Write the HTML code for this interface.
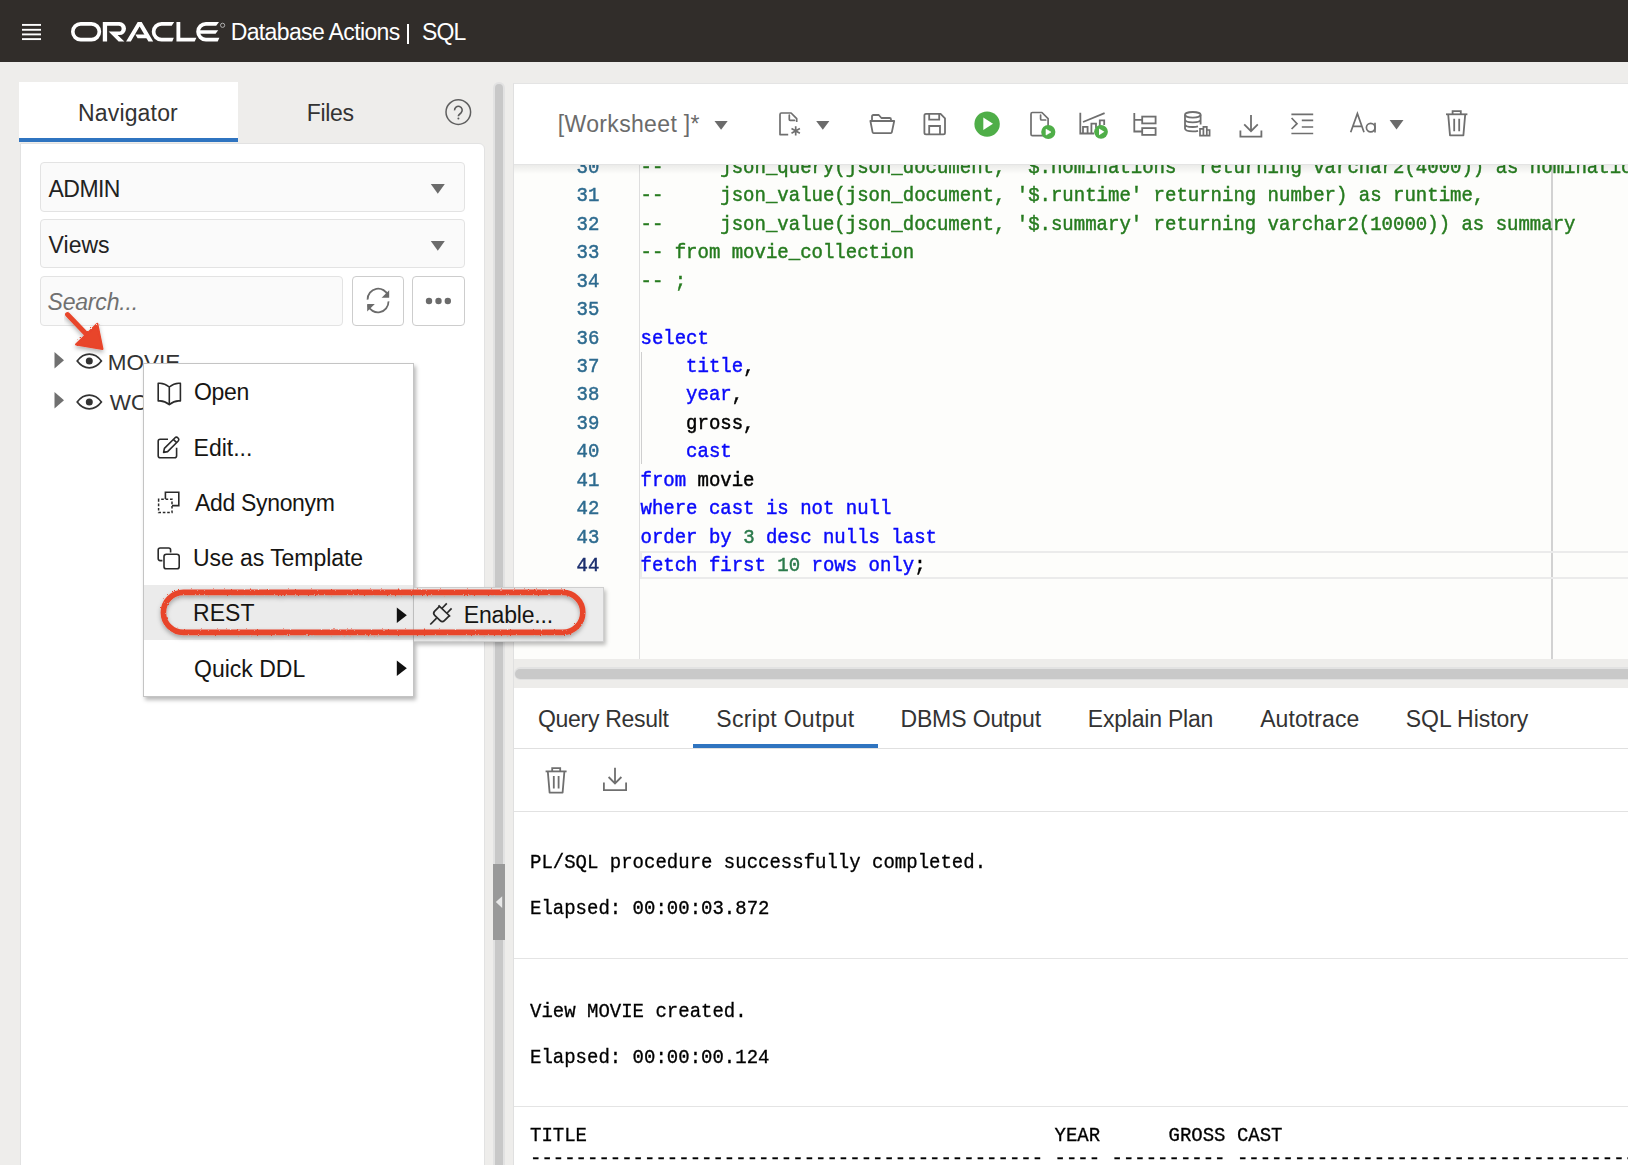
<!DOCTYPE html>
<html><head><meta charset="utf-8"><title>Database Actions | SQL</title>
<style>
html,body{margin:0;padding:0;}
body{width:1628px;height:1165px;overflow:hidden;position:relative;background:#eeedeb;font-family:"Liberation Sans",sans-serif;}
.t{position:absolute;white-space:pre;font-family:"Liberation Sans",sans-serif;line-height:normal;}
.m{position:absolute;white-space:pre;font-family:"Liberation Mono",monospace;line-height:normal;-webkit-text-stroke:0.45px currentColor;}
</style></head><body>

<div style="position:absolute;left:0px;top:0px;width:1628px;height:62px;background:#312d2a;"></div>
<svg style="position:absolute;left:0px;top:0px;overflow:visible;" width="60" height="62" viewBox="0 0 60 62"><line x1="22" y1="24.9" x2="41" y2="24.9" stroke="#fff" stroke-width="1.9"/><line x1="22" y1="29.8" x2="41" y2="29.8" stroke="#fff" stroke-width="1.9"/><line x1="22" y1="34.4" x2="41" y2="34.4" stroke="#fff" stroke-width="1.9"/><line x1="22" y1="39.1" x2="41" y2="39.1" stroke="#fff" stroke-width="1.9"/></svg>
<svg style="position:absolute;left:71px;top:21.7px;overflow:visible;" width="155" height="20" viewBox="0 0 155 20"><g fill="#fff" fill-rule="evenodd">
<path d="M9.75,0 H20.45 A9.75,9.75 0 0 1 20.45,19.5 H9.75 A9.75,9.75 0 0 1 9.75,0 Z M9.65,3.7 H20.45 A6.05,6.05 0 0 1 20.45,15.8 H9.65 A6.05,6.05 0 0 1 9.65,3.7 Z"/>
<path d="M31.8,19.5 V0 H48.45 A6.55,6.55 0 0 1 48.45,13.1 H46.6 L53.4,19.5 H47.6 L37.6,9.6 H47.65 A2.95,2.95 0 0 0 47.65,3.7 H36.1 V19.5 Z"/>
<path d="M55.1,19.5 L66.7,0 H70.7 L82.2,19.5 H77.4 L68.6,4.4 L59.8,19.5 Z"/>
<path d="M64.4,12.5 H74.6 L76.7,16.2 H66.6 Z"/>
<path d="M103.2,0 H90.5 A9.75,9.75 0 0 0 90.5,19.5 H101.3 L102.8,15.8 H90.5 A6.05,6.05 0 0 1 90.5,3.7 H100.7 Z"/>
<path d="M105.45,0 H109.3 V15.8 H125.4 L123.7,19.5 H105.45 Z"/>
<path d="M148,0 H134.95 A9.75,9.75 0 0 0 134.95,19.5 H146.7 L148.4,15.8 H134.95 A6,6 0 0 1 134.95,3.8 H145.2 Z"/>
<path d="M128.95,8.3 H147.2 L144.6,11.8 H128.95 Z"/>
</g>
<circle cx="151.6" cy="3.3" r="2.1" fill="none" stroke="#bbb" stroke-width="0.9"/></svg>
<div class="t" style="left:230.70px;top:19.00px;font-size:23px;color:#fff;letter-spacing:-0.627px;">Database Actions</div>
<div style="position:absolute;left:406.5px;top:23.5px;width:2.3000000000000114px;height:20.700000000000003px;background:#fff;"></div>
<div class="t" style="left:422.00px;top:19.00px;font-size:23px;color:#fff;letter-spacing:-0.85px;">SQL</div>
<div style="position:absolute;left:19px;top:82px;width:219px;height:60px;background:#fff;"></div>
<div style="position:absolute;left:19px;top:138px;width:219px;height:4px;background:#2f74c0;"></div>
<div class="t" style="left:78.00px;top:100.00px;font-size:23px;color:#333;letter-spacing:0.163px;">Navigator</div>
<div class="t" style="left:306.80px;top:100.00px;font-size:23px;color:#333;letter-spacing:-0.325px;">Files</div>
<svg style="position:absolute;left:440px;top:94px;overflow:visible;" width="36" height="36" viewBox="0 0 36 36"><circle cx="18.3" cy="18.1" r="12.3" fill="none" stroke="#5f5f5f" stroke-width="1.5"/><path d="M14.6,16.4 A3.8,3.8 0 1 1 21.2,18.6 L19.2,20.6 Q18.4,21.4 18.4,22.2" fill="none" stroke="#5a5a5a" stroke-width="1.6"/><circle cx="18.4" cy="24.6" r="1" fill="#5a5a5a"/></svg>
<div style="position:absolute;left:19.5px;top:142.5px;width:465.0px;height:1057.5px;background:#fff;border:1px solid #e2e2e2;border-top-right-radius:6px;box-sizing:border-box;"></div>
<div style="position:absolute;left:39.5px;top:162.3px;width:425.1px;height:50.099999999999994px;background:#fafafa;border:1px solid #e3e3e3;border-radius:4px;box-sizing:border-box;"></div>
<div class="t" style="left:48.60px;top:176.00px;font-size:23px;color:#222;letter-spacing:-0.575px;">ADMIN</div>
<svg style="position:absolute;left:430px;top:184px;overflow:visible;" width="16" height="10" viewBox="0 0 16 10"><path d="M0.8,0 H14.8 L7.8,9.8 Z" fill="#6b6b6b"/></svg>
<div style="position:absolute;left:39.5px;top:219.3px;width:425.1px;height:49.099999999999966px;background:#fafafa;border:1px solid #e3e3e3;border-radius:4px;box-sizing:border-box;"></div>
<div class="t" style="left:48.60px;top:232.00px;font-size:23px;color:#222;letter-spacing:0px;">Views</div>
<svg style="position:absolute;left:430px;top:241px;overflow:visible;" width="16" height="10" viewBox="0 0 16 10"><path d="M0.8,0 H14.8 L7.8,9.8 Z" fill="#6b6b6b"/></svg>
<div style="position:absolute;left:39.6px;top:276.3px;width:303.79999999999995px;height:49.39999999999998px;background:#fafafa;border:1px solid #e3e3e3;border-radius:4px;box-sizing:border-box;"></div>
<div class="t" style="left:47.50px;top:289.00px;font-size:23px;color:#707070;letter-spacing:-0.188px;font-style:italic;">Search...</div>
<div style="position:absolute;left:352.3px;top:276.3px;width:51.39999999999998px;height:49.39999999999998px;background:#fff;border:1px solid #cdcdcd;border-radius:4px;box-sizing:border-box;"></div>
<div style="position:absolute;left:412.4px;top:276.3px;width:52.200000000000045px;height:49.39999999999998px;background:#fff;border:1px solid #cdcdcd;border-radius:4px;box-sizing:border-box;"></div>
<svg style="position:absolute;left:362px;top:285px;overflow:visible;" width="32" height="32" viewBox="0 0 32 32"><path d="M26.2,10.8 A10.6,10.6 0 0 0 5.6,14.6" fill="none" stroke="#6b6b6b" stroke-width="1.8"/><path d="M5.9,20.2 A10.6,10.6 0 0 0 26.5,16.4" fill="none" stroke="#6b6b6b" stroke-width="1.8"/><path d="M27.2,5.2 V12.8 H19.6 Z" fill="#6b6b6b"/><path d="M5.2,26.6 V19 H12.8 Z" fill="#6b6b6b"/></svg>
<svg style="position:absolute;left:420px;top:292px;overflow:visible;" width="40" height="18" viewBox="0 0 40 18"><circle cx="9" cy="9" r="3.2" fill="#6b6b6b"/><circle cx="18.5" cy="9" r="3.2" fill="#6b6b6b"/><circle cx="27.8" cy="9" r="3.2" fill="#6b6b6b"/></svg>
<svg style="position:absolute;left:54px;top:352.2px;overflow:visible;" width="12" height="17" viewBox="0 0 12 17"><path d="M0.5,0 L10,8.3 L0.5,16.6 Z" fill="#707070"/></svg>
<svg style="position:absolute;left:76px;top:353.1px;overflow:visible;" width="27" height="16" viewBox="0 0 27 16"><path d="M1.2,8 C6,1.6 10,1.2 13.3,1.2 C16.6,1.2 20.6,1.6 25.4,8 C20.6,14.4 16.6,14.8 13.3,14.8 C10,14.8 6,14.4 1.2,8 Z" fill="none" stroke="#333" stroke-width="1.7" stroke-linejoin="miter"/><circle cx="13.3" cy="8" r="3.5" fill="#333"/></svg>
<div class="t" style="left:107.70px;top:350.00px;font-size:22.5px;color:#333;letter-spacing:0px;">MOVIE</div>
<svg style="position:absolute;left:54px;top:392.2px;overflow:visible;" width="12" height="17" viewBox="0 0 12 17"><path d="M0.5,0 L10,8.3 L0.5,16.6 Z" fill="#707070"/></svg>
<svg style="position:absolute;left:76px;top:394px;overflow:visible;" width="27" height="16" viewBox="0 0 27 16"><path d="M1.2,8 C6,1.6 10,1.2 13.3,1.2 C16.6,1.2 20.6,1.6 25.4,8 C20.6,14.4 16.6,14.8 13.3,14.8 C10,14.8 6,14.4 1.2,8 Z" fill="none" stroke="#333" stroke-width="1.7" stroke-linejoin="miter"/><circle cx="13.3" cy="8" r="3.5" fill="#333"/></svg>
<div class="t" style="left:109.70px;top:390.00px;font-size:22.5px;color:#333;letter-spacing:0px;">WORKSHOP</div>
<div style="position:absolute;left:493px;top:82px;width:12px;height:1083px;background:#e2e2e2;border-radius:6px 6px 0 0;"></div>
<div style="position:absolute;left:495px;top:84px;width:8px;height:1081px;background:#c8c8c8;border-radius:4px 4px 0 0;"></div>
<div style="position:absolute;left:493px;top:864px;width:12px;height:76px;background:#999;"></div>
<svg style="position:absolute;left:493px;top:864px;overflow:visible;" width="12" height="76" viewBox="0 0 12 76"><path d="M2.8,38 L9.2,32.2 V44 Z" fill="#e8e8e8"/></svg>
<div style="position:absolute;left:513px;top:82.5px;width:1115px;height:1082.5px;background:#fff;border-left:1px solid #e0e0e0;border-top:1px solid #e4e4e4;box-sizing:border-box;"></div>
<div style="position:absolute;left:514px;top:164px;width:1114px;height:495px;background:#fdfdfb;"></div>
<div style="position:absolute;left:639px;top:164px;width:1px;height:495px;background:#dedede;"></div>
<div style="position:absolute;left:1551px;top:164px;width:2px;height:495px;background:#d2d2d2;"></div>
<div style="position:absolute;left:640px;top:550.5px;width:988px;height:28.0px;border:2.5px solid #ebebeb;border-right:none;box-sizing:border-box;"></div>
<div style="position:absolute;left:641px;top:351.5px;width:1px;height:112.0px;background:#cfcfcf;"></div>
<div style="position:absolute;left:514px;top:164px;width:1114px;height:495px;overflow:hidden;">
<div class="m" style="left:62.5px;top:-7.019999999999982px;font-size:19px;color:#2e6b8f;width:22.8px;text-align:right;transform:scaleY(1.1);transform-origin:0 16px;">30</div>
<div class="m" style="left:126.5px;top:-7.019999999999982px;font-size:19px;color:#000;transform:scaleY(1.1);transform-origin:0 16px;"><span style="color:#267b1f">--     json_query(json_document, &#x27;$.nominations&#x27; returning varchar2(4000)) as nominations,</span></div>
<div class="m" style="left:62.5px;top:21.410000000000025px;font-size:19px;color:#2e6b8f;width:22.8px;text-align:right;transform:scaleY(1.1);transform-origin:0 16px;">31</div>
<div class="m" style="left:126.5px;top:21.410000000000025px;font-size:19px;color:#000;transform:scaleY(1.1);transform-origin:0 16px;"><span style="color:#267b1f">--     json_value(json_document, &#x27;$.runtime&#x27; returning number) as runtime,</span></div>
<div class="m" style="left:62.5px;top:49.84000000000003px;font-size:19px;color:#2e6b8f;width:22.8px;text-align:right;transform:scaleY(1.1);transform-origin:0 16px;">32</div>
<div class="m" style="left:126.5px;top:49.84000000000003px;font-size:19px;color:#000;transform:scaleY(1.1);transform-origin:0 16px;"><span style="color:#267b1f">--     json_value(json_document, &#x27;$.summary&#x27; returning varchar2(10000)) as summary</span></div>
<div class="m" style="left:62.5px;top:78.26999999999998px;font-size:19px;color:#2e6b8f;width:22.8px;text-align:right;transform:scaleY(1.1);transform-origin:0 16px;">33</div>
<div class="m" style="left:126.5px;top:78.26999999999998px;font-size:19px;color:#000;transform:scaleY(1.1);transform-origin:0 16px;"><span style="color:#267b1f">-- from movie_collection</span></div>
<div class="m" style="left:62.5px;top:106.69999999999999px;font-size:19px;color:#2e6b8f;width:22.8px;text-align:right;transform:scaleY(1.1);transform-origin:0 16px;">34</div>
<div class="m" style="left:126.5px;top:106.69999999999999px;font-size:19px;color:#000;transform:scaleY(1.1);transform-origin:0 16px;"><span style="color:#267b1f">-- ;</span></div>
<div class="m" style="left:62.5px;top:135.13px;font-size:19px;color:#2e6b8f;width:22.8px;text-align:right;transform:scaleY(1.1);transform-origin:0 16px;">35</div>
<div class="m" style="left:126.5px;top:135.13px;font-size:19px;color:#000;transform:scaleY(1.1);transform-origin:0 16px;"></div>
<div class="m" style="left:62.5px;top:163.56px;font-size:19px;color:#2e6b8f;width:22.8px;text-align:right;transform:scaleY(1.1);transform-origin:0 16px;">36</div>
<div class="m" style="left:126.5px;top:163.56px;font-size:19px;color:#000;transform:scaleY(1.1);transform-origin:0 16px;"><span style="color:#0a0afa">select</span></div>
<div class="m" style="left:62.5px;top:191.99px;font-size:19px;color:#2e6b8f;width:22.8px;text-align:right;transform:scaleY(1.1);transform-origin:0 16px;">37</div>
<div class="m" style="left:126.5px;top:191.99px;font-size:19px;color:#000;transform:scaleY(1.1);transform-origin:0 16px;">    <span style="color:#0a0afa">title</span>,</div>
<div class="m" style="left:62.5px;top:220.42000000000002px;font-size:19px;color:#2e6b8f;width:22.8px;text-align:right;transform:scaleY(1.1);transform-origin:0 16px;">38</div>
<div class="m" style="left:126.5px;top:220.42000000000002px;font-size:19px;color:#000;transform:scaleY(1.1);transform-origin:0 16px;">    <span style="color:#0a0afa">year</span>,</div>
<div class="m" style="left:62.5px;top:248.85000000000002px;font-size:19px;color:#2e6b8f;width:22.8px;text-align:right;transform:scaleY(1.1);transform-origin:0 16px;">39</div>
<div class="m" style="left:126.5px;top:248.85000000000002px;font-size:19px;color:#000;transform:scaleY(1.1);transform-origin:0 16px;">    gross,</div>
<div class="m" style="left:62.5px;top:277.28px;font-size:19px;color:#2e6b8f;width:22.8px;text-align:right;transform:scaleY(1.1);transform-origin:0 16px;">40</div>
<div class="m" style="left:126.5px;top:277.28px;font-size:19px;color:#000;transform:scaleY(1.1);transform-origin:0 16px;">    <span style="color:#0a0afa">cast</span></div>
<div class="m" style="left:62.5px;top:305.71000000000004px;font-size:19px;color:#2e6b8f;width:22.8px;text-align:right;transform:scaleY(1.1);transform-origin:0 16px;">41</div>
<div class="m" style="left:126.5px;top:305.71000000000004px;font-size:19px;color:#000;transform:scaleY(1.1);transform-origin:0 16px;"><span style="color:#0a0afa">from</span> movie</div>
<div class="m" style="left:62.5px;top:334.14px;font-size:19px;color:#2e6b8f;width:22.8px;text-align:right;transform:scaleY(1.1);transform-origin:0 16px;">42</div>
<div class="m" style="left:126.5px;top:334.14px;font-size:19px;color:#000;transform:scaleY(1.1);transform-origin:0 16px;"><span style="color:#0a0afa">where cast is not null</span></div>
<div class="m" style="left:62.5px;top:362.57000000000005px;font-size:19px;color:#2e6b8f;width:22.8px;text-align:right;transform:scaleY(1.1);transform-origin:0 16px;">43</div>
<div class="m" style="left:126.5px;top:362.57000000000005px;font-size:19px;color:#000;transform:scaleY(1.1);transform-origin:0 16px;"><span style="color:#0a0afa">order by</span> <span style="color:#2b7a4b">3</span> <span style="color:#0a0afa">desc nulls last</span></div>
<div class="m" style="left:62.5px;top:391.0px;font-size:19px;color:#1c2f6e;width:22.8px;text-align:right;transform:scaleY(1.1);transform-origin:0 16px;">44</div>
<div class="m" style="left:126.5px;top:391.0px;font-size:19px;color:#000;transform:scaleY(1.1);transform-origin:0 16px;"><span style="color:#0a0afa">fetch first</span> <span style="color:#2b7a4b">10</span> <span style="color:#0a0afa">rows only</span>;</div>
</div>
<div style="position:absolute;left:514px;top:165px;width:1114px;height:9px;background:linear-gradient(rgba(0,0,0,0.07),rgba(0,0,0,0));"></div>
<div style="position:absolute;left:514px;top:164px;width:1114px;height:1px;background:#e4e4e4;"></div>
<div class="t" style="left:557.80px;top:111.00px;font-size:23px;color:#6b6b6b;letter-spacing:0.342px;">[Worksheet ]*</div>
<svg style="position:absolute;left:714px;top:120.5px;overflow:visible;" width="14" height="10" viewBox="0 0 14 10"><path d="M0.5,0 H13.7 L7.1,8.8 Z" fill="#6b6b6b"/></svg>
<svg style="position:absolute;left:816px;top:120.5px;overflow:visible;" width="14" height="10" viewBox="0 0 14 10"><path d="M0.2,0 H13.4 L6.8,8.8 Z" fill="#6b6b6b"/></svg>
<svg style="position:absolute;left:776px;top:108px;overflow:visible;" width="30" height="30" viewBox="0 0 30 30"><path d="M12.2,26.6 H4 V6.4 Q4,5 5.4,5 H15.1 L20.7,10.6 V14" fill="none" stroke="#6f6f6f" stroke-width="1.7" stroke-linejoin="round"/><path d="M13.3,7.2 V11.5 Q13.3,12.3 14.1,12.3 H18.5" fill="none" stroke="#6f6f6f" stroke-width="1.7" stroke-linecap="round"/><path d="M19.7,18.2 V27.6 M15.5,20.6 L23.9,25.2 M15.5,25.2 L23.9,20.6" stroke="#6f6f6f" stroke-width="1.7"/></svg>
<svg style="position:absolute;left:868px;top:110px;overflow:visible;" width="30" height="28" viewBox="0 0 30 28"><path d="M4,10.2 V6.4 Q4,5 5.4,5 H10.8 L13.4,8 H21.6 Q23,8 23,9.4 V10.2" fill="none" stroke="#6f6f6f" stroke-width="1.8" stroke-linejoin="round"/><path d="M2.4,11 H26.2 L23.8,22.4 Q23.6,23.2 22.8,23.2 H5.6 Q4.8,23.2 4.6,22.4 Z" fill="none" stroke="#6f6f6f" stroke-width="1.8" stroke-linejoin="round"/></svg>
<svg style="position:absolute;left:921px;top:110px;overflow:visible;" width="28" height="28" viewBox="0 0 28 28"><path d="M5,3.9 H19.6 L24,8.3 V22.8 Q24,24.4 22.4,24.4 H5 Q3.4,24.4 3.4,22.8 V5.5 Q3.4,3.9 5,3.9 Z" fill="none" stroke="#6f6f6f" stroke-width="1.8" stroke-linejoin="round"/><path d="M8.2,4 V9.6 H18.2 V4" fill="none" stroke="#6f6f6f" stroke-width="1.8"/><path d="M8.2,24.3 V16 H19 V24.3" fill="none" stroke="#6f6f6f" stroke-width="1.8"/></svg>
<svg style="position:absolute;left:972px;top:109px;overflow:visible;" width="30" height="30" viewBox="0 0 30 30"><circle cx="15.1" cy="15.1" r="12.7" fill="#4fae48"/><path d="M11.3,8.6 V21 L21,14.8 Z" fill="#fff"/></svg>
<svg style="position:absolute;left:1026px;top:108px;overflow:visible;" width="34" height="34" viewBox="0 0 34 34"><path d="M17,27.7 H6.4 Q5,27.7 5,26.3 V5.9 Q5,4.5 6.4,4.5 H15.9 L22.1,10.7 V18.6" fill="none" stroke="#6f6f6f" stroke-width="1.7" stroke-linejoin="round"/><path d="M14.6,7 V11 Q14.6,12 15.6,12 H19.7" fill="none" stroke="#6f6f6f" stroke-width="1.7" stroke-linecap="round"/><circle cx="22.3" cy="24" r="7.1" fill="#4fae48"/><path d="M20,21.2 V27 L25,24.1 Z" fill="#fff" stroke="#fff" stroke-width="0.6" stroke-linejoin="round"/></svg>
<svg style="position:absolute;left:1076px;top:108px;overflow:visible;" width="34" height="34" viewBox="0 0 34 34"><path d="M4.3,4.8 V25.5 H18" fill="none" stroke="#6f6f6f" stroke-width="1.8"/><path d="M7,14 L28.6,5.2" stroke="#6f6f6f" stroke-width="1.8"/><path d="M7,25.5 V18.8 H11.6 V25.5 M15.4,25.5 V15.6 H20 V20 M23.8,18 V12.4 H28.2 V17" fill="none" stroke="#6f6f6f" stroke-width="1.8"/><circle cx="25" cy="23.8" r="6.9" fill="#4fae48"/><path d="M23,20.4 V27.2 L28.4,23.8 Z" fill="#fff"/></svg>
<svg style="position:absolute;left:1130px;top:108px;overflow:visible;" width="30" height="30" viewBox="0 0 30 30"><path d="M4.3,5 V23.5 H12.2 M4.3,11.8 H12.2" fill="none" stroke="#6f6f6f" stroke-width="1.8"/><rect x="12.2" y="8.6" width="13.4" height="6.8" fill="none" stroke="#6f6f6f" stroke-width="1.8"/><rect x="12.2" y="20.1" width="13.4" height="6.8" fill="none" stroke="#6f6f6f" stroke-width="1.8"/></svg>
<svg style="position:absolute;left:1182px;top:108px;overflow:visible;" width="32" height="32" viewBox="0 0 32 32"><ellipse cx="10.8" cy="6.8" rx="7.8" ry="2.8" fill="none" stroke="#6f6f6f" stroke-width="1.8"/><path d="M3,6.8 V20.6 Q3,23.4 10.8,23.4 Q14,23.4 16,22.8 M3,11.6 Q3,14.4 10.8,14.4 Q18.6,14.4 18.6,11.6 M3,16.2 Q3,19 10.8,19 Q14,19 16,18.4 M18.6,6.8 V16.5" fill="none" stroke="#6f6f6f" stroke-width="1.8"/><path d="M18,27.6 V20.8 H21.4 V27.6 Z M21.4,27.6 V18.8 H24.8 V27.6 Z M24.8,27.6 V22 H27.6 V27.6 Z" fill="none" stroke="#6f6f6f" stroke-width="1.7"/></svg>
<svg style="position:absolute;left:1236px;top:108px;overflow:visible;" width="30" height="32" viewBox="0 0 30 32"><path d="M15,7 V23.2 M8.2,16.4 L15,23.2 L21.8,16.4" fill="none" stroke="#6f6f6f" stroke-width="1.8"/><path d="M4.4,22.4 V28.6 H25.4 V22.4" fill="none" stroke="#6f6f6f" stroke-width="1.8"/></svg>
<svg style="position:absolute;left:1288px;top:108px;overflow:visible;" width="30" height="30" viewBox="0 0 30 30"><path d="M3.4,6.3 H25.2 M13.8,12.4 H25.2 M13.8,19 H25.2 M3.4,25.5 H25.2" stroke="#6f6f6f" stroke-width="1.7"/><path d="M3.6,10 L9,15.7 L3.6,21" fill="none" stroke="#6f6f6f" stroke-width="1.7"/></svg>
<svg style="position:absolute;left:1348px;top:110px;overflow:visible;" width="32" height="26" viewBox="0 0 32 26"><path d="M2.7,22.2 L9.4,3.6 L16,22.2 M5,16.4 H13.8" fill="none" stroke="#6f6f6f" stroke-width="1.7"/><circle cx="22.7" cy="17.6" r="4.3" fill="none" stroke="#6f6f6f" stroke-width="1.7"/><path d="M27,12.8 V22.6" stroke="#6f6f6f" stroke-width="1.7"/></svg>
<svg style="position:absolute;left:1389px;top:120px;overflow:visible;" width="15" height="10" viewBox="0 0 15 10"><path d="M0.6,0 H14.5 L7.55,9.5 Z" fill="#6b6b6b"/></svg>
<svg style="position:absolute;left:1443px;top:108px;overflow:visible;" width="28" height="30" viewBox="0 0 28 30"><path d="M3,6.3 H24.4" stroke="#6f6f6f" stroke-width="1.8"/><path d="M9.6,6.3 V3.2 H17.8 V6.3" fill="none" stroke="#6f6f6f" stroke-width="1.8"/><path d="M5.2,6.3 L7,27.4 H20.4 L22.2,6.3" fill="none" stroke="#6f6f6f" stroke-width="1.8" stroke-linejoin="round"/><path d="M11.2,10.8 V23.2 M16.2,10.8 V23.2" stroke="#6f6f6f" stroke-width="1.8"/></svg>
<div style="position:absolute;left:514px;top:659px;width:1114px;height:29px;background:#edecea;"></div>
<div style="position:absolute;left:513.5px;top:667px;width:1114.5px;height:13px;background:#e2e2e2;border-radius:7px 0 0 7px;"></div>
<div style="position:absolute;left:514.6px;top:668.5px;width:1113.4px;height:10.0px;background:#c9c9c9;border-radius:5px 0 0 5px;"></div>
<div style="position:absolute;left:514px;top:688px;width:1114px;height:477px;background:#fff;"></div>
<div class="t" style="left:538.00px;top:706.00px;font-size:23px;color:#333;letter-spacing:-0.3px;">Query Result</div>
<div class="t" style="left:716.30px;top:706.00px;font-size:23px;color:#333;letter-spacing:0.308px;">Script Output</div>
<div class="t" style="left:900.40px;top:706.00px;font-size:23px;color:#333;letter-spacing:-0.12px;">DBMS Output</div>
<div class="t" style="left:1087.80px;top:706.00px;font-size:23px;color:#333;letter-spacing:-0.209px;">Explain Plan</div>
<div class="t" style="left:1260.20px;top:706.00px;font-size:23px;color:#333;letter-spacing:0.088px;">Autotrace</div>
<div class="t" style="left:1405.80px;top:706.00px;font-size:23px;color:#333;letter-spacing:-0.06px;">SQL History</div>
<div style="position:absolute;left:514px;top:748px;width:1114px;height:1px;background:#e0e0e0;"></div>
<div style="position:absolute;left:693px;top:744px;width:185px;height:4.399999999999977px;background:#2f74c0;"></div>
<svg style="position:absolute;left:543px;top:765px;overflow:visible;" width="28" height="30" viewBox="0 0 28 30"><path d="M2.6,6.4 H23.6" stroke="#6f6f6f" stroke-width="1.8"/><path d="M9.2,6.4 V3.2 H17.2 V6.4" fill="none" stroke="#6f6f6f" stroke-width="1.8"/><path d="M4.8,6.4 L6.6,27.6 H19.6 L21.4,6.4" fill="none" stroke="#6f6f6f" stroke-width="1.8" stroke-linejoin="round"/><path d="M10.8,11 V23.4 M15.6,11 V23.4" stroke="#6f6f6f" stroke-width="1.8"/></svg>
<svg style="position:absolute;left:600px;top:765px;overflow:visible;" width="30" height="30" viewBox="0 0 30 30"><path d="M15,2.8 V18.4 M8.6,12 L15,18.4 L21.4,12" fill="none" stroke="#6f6f6f" stroke-width="1.8"/><path d="M3.9,17.6 V25.2 H26.1 V17.6" fill="none" stroke="#6f6f6f" stroke-width="1.8"/></svg>
<div style="position:absolute;left:514px;top:811px;width:1114px;height:1px;background:#e2e2e2;"></div>
<div class="m" style="left:530px;top:852px;font-size:19px;color:#000;transform:scaleY(1.1);transform-origin:0 16px;-webkit-text-stroke:0.3px currentColor;">PL/SQL procedure successfully completed.</div>
<div class="m" style="left:530px;top:897.8px;font-size:19px;color:#000;transform:scaleY(1.1);transform-origin:0 16px;-webkit-text-stroke:0.3px currentColor;">Elapsed: 00:00:03.872</div>
<div style="position:absolute;left:514px;top:958px;width:1114px;height:1px;background:#e4e4e4;"></div>
<div class="m" style="left:530px;top:1000.9px;font-size:19px;color:#000;transform:scaleY(1.1);transform-origin:0 16px;-webkit-text-stroke:0.3px currentColor;">View MOVIE created.</div>
<div class="m" style="left:530px;top:1046.6px;font-size:19px;color:#000;transform:scaleY(1.1);transform-origin:0 16px;-webkit-text-stroke:0.3px currentColor;">Elapsed: 00:00:00.124</div>
<div style="position:absolute;left:514px;top:1106px;width:1114px;height:1px;background:#e4e4e4;"></div>
<div class="m" style="left:530px;top:1125.4px;font-size:19px;color:#000;transform:scaleY(1.1);transform-origin:0 16px;-webkit-text-stroke:0.3px currentColor;">TITLE                                         YEAR      GROSS CAST</div>
<div class="m" style="left:530px;top:1147.5px;font-size:19px;color:#000;transform:scaleY(1.1);transform-origin:0 16px;-webkit-text-stroke:0.3px currentColor;">--------------------------------------------- ---- ---------- ----------------------------------------</div>
<div style="position:absolute;left:142.5px;top:363.3px;width:271.2px;height:333.5px;background:#fff;border:1px solid #c4c4c4;box-sizing:border-box;box-shadow:2px 3px 4px rgba(0,0,0,0.28);"></div>
<div style="position:absolute;left:143.5px;top:584.7px;width:269.2px;height:55.5px;background:#ebebeb;"></div>
<div class="t" style="left:194.00px;top:379.00px;font-size:23px;color:#161513;letter-spacing:-0.333px;">Open</div>
<div class="t" style="left:193.60px;top:435.00px;font-size:23px;color:#161513;letter-spacing:0px;">Edit...</div>
<div class="t" style="left:195.00px;top:490.00px;font-size:23px;color:#161513;letter-spacing:-0.33px;">Add Synonym</div>
<div class="t" style="left:193.00px;top:545.00px;font-size:23px;color:#161513;letter-spacing:-0.057px;">Use as Template</div>
<div class="t" style="left:193.10px;top:600.00px;font-size:23px;color:#161513;letter-spacing:0px;">REST</div>
<div class="t" style="left:194.00px;top:656.00px;font-size:23px;color:#161513;letter-spacing:0px;">Quick DDL</div>
<svg style="position:absolute;left:155px;top:380px;overflow:visible;" width="30" height="28" viewBox="0 0 30 28"><path d="M14.3,7 Q9,2.6 3.2,3.4 V21 Q9,20.2 14.3,24.6 Q19.6,20.2 25.4,21 V3.4 Q19.6,2.6 14.3,7 Z M14.3,7 V24" fill="none" stroke="#2a2a2a" stroke-width="1.6" stroke-linejoin="round"/></svg>
<svg style="position:absolute;left:155px;top:434px;overflow:visible;" width="28" height="28" viewBox="0 0 28 28"><path d="M13,5.2 H5.2 Q3.2,5.2 3.2,7.2 V21.8 Q3.2,23.8 5.2,23.8 H19.6 Q21.6,23.8 21.6,21.8 V13.8" fill="none" stroke="#2a2a2a" stroke-width="1.6"/><path d="M8.6,18.4 L9.4,14.4 L19.8,4 Q21.4,2.4 23,4 Q24.6,5.6 23,7.2 L12.6,17.6 Z M18.4,5.4 L21.6,8.6" fill="none" stroke="#2a2a2a" stroke-width="1.6" stroke-linejoin="round"/></svg>
<svg style="position:absolute;left:155px;top:489px;overflow:visible;" width="28" height="28" viewBox="0 0 28 28"><path d="M3.6,10.2 V23.6 H17 V10.2 Z" fill="none" stroke="#2a2a2a" stroke-width="1.5" stroke-dasharray="2.6,1.8"/><path d="M10.4,10 V3.2 H23.8 V16.6 H17" fill="none" stroke="#2a2a2a" stroke-width="1.6"/></svg>
<svg style="position:absolute;left:155px;top:545px;overflow:visible;" width="28" height="28" viewBox="0 0 28 28"><path d="M7.4,15.6 H5.2 Q3.2,15.6 3.2,13.6 V5 Q3.2,3 5.2,3 H13.6 Q15.6,3 15.6,5 V7.4" fill="none" stroke="#2a2a2a" stroke-width="1.6"/><rect x="9" y="9.2" width="15.2" height="14.6" rx="2.4" fill="none" stroke="#2a2a2a" stroke-width="1.6"/></svg>
<svg style="position:absolute;left:396px;top:606.5px;overflow:visible;" width="12" height="17" viewBox="0 0 12 17"><path d="M0.8,0.5 L10.8,8.3 L0.8,16.1 Z" fill="#111"/></svg>
<svg style="position:absolute;left:396px;top:660px;overflow:visible;" width="12" height="17" viewBox="0 0 12 17"><path d="M0.8,0.5 L10.8,8.3 L0.8,16.1 Z" fill="#111"/></svg>
<div style="position:absolute;left:413.6px;top:587.1px;width:190.1px;height:55.1px;background:#ececec;border:1px solid #cfcfcf;border-left:none;box-sizing:border-box;box-shadow:2px 3px 4px rgba(0,0,0,0.25);"></div>
<svg style="position:absolute;left:428px;top:602px;overflow:visible;" width="26" height="26" viewBox="0 0 26 26"><path d="M2.3,22.5 L8.6,16.2" stroke="#2a2a2a" stroke-width="1.7"/><path d="M11.5,4.3 L6.7,9.1 Q4.6,11.2 6.7,13.3 L12.2,18.6 Q14.3,20.7 16.4,18.6 L21.2,13.8" fill="none" stroke="#2a2a2a" stroke-width="1.7" stroke-linejoin="round"/><path d="M10.5,3.3 L22.2,14.5 M13.8,6.5 L18.8,1.4 M19.1,11 L23.6,6.4" fill="none" stroke="#2a2a2a" stroke-width="1.7"/></svg>
<div class="t" style="left:463.80px;top:602.00px;font-size:23px;color:#161513;letter-spacing:-0.188px;">Enable...</div>
<svg style="position:absolute;left:0;top:0;overflow:visible" width="1628" height="1165" viewBox="0 0 1628 1165"><defs><filter id="sh" x="-10%" y="-20%" width="130%" height="150%"><feDropShadow dx="0" dy="2.5" stdDeviation="2.2" flood-color="#000" flood-opacity="0.3"/></filter><filter id="rough" x="-5%" y="-20%" width="110%" height="140%"><feTurbulence type="fractalNoise" baseFrequency="0.7" numOctaves="2" seed="4"/><feDisplacementMap in="SourceGraphic" scale="2.4"/></filter></defs><g filter="url(#sh)"><rect x="163.4" y="592.4" width="419.4" height="40" rx="20" ry="20" fill="none" stroke="#e8442a" stroke-width="5.6" filter="url(#rough)"/></g><g filter="url(#sh)"><g filter="url(#rough)"><path d="M67.5,314.5 L90,338" stroke="#e8442a" stroke-width="4.9" stroke-linecap="round"/><path d="M76,344.5 L97.3,323.8 L102.5,349 Z" fill="#e8442a" stroke="#e8442a" stroke-width="2" stroke-linejoin="round"/></g></g></svg>
</body></html>
